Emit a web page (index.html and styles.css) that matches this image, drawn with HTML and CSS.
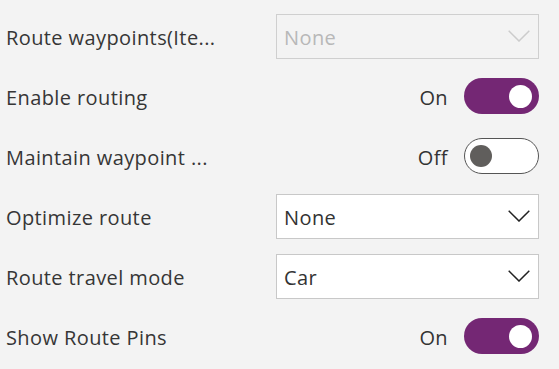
FILE: index.html
```html
<!DOCTYPE html>
<html>
<head>
<meta charset="utf-8">
<link rel="stylesheet" href="styles.css">
</head>
<body>
<div class="panel">
  <div class="row">
    <div class="label">Route waypoints(Ite...</div>
    <div class="dropdown disabled"><span class="value">None</span>
      <svg class="chev" viewBox="0 0 22 12"><path d="M0.7 0.7 L11 11 L21.3 0.7" /></svg></div>
  </div>
  <div class="row">
    <div class="label">Enable routing</div>
    <div class="toggle-wrap"><span class="state">On</span><span class="toggle on"><span class="knob"></span></span></div>
  </div>
  <div class="row">
    <div class="label">Maintain waypoint ...</div>
    <div class="toggle-wrap"><span class="state">Off</span><span class="toggle off"><span class="knob"></span></span></div>
  </div>
  <div class="row">
    <div class="label">Optimize route</div>
    <div class="dropdown"><span class="value">None</span>
      <svg class="chev" viewBox="0 0 22 12"><path d="M0.7 0.7 L11 11 L21.3 0.7" /></svg></div>
  </div>
  <div class="row">
    <div class="label">Route travel mode</div>
    <div class="dropdown"><span class="value">Car</span>
      <svg class="chev" viewBox="0 0 22 12"><path d="M0.7 0.7 L11 11 L21.3 0.7" /></svg></div>
  </div>
  <div class="row">
    <div class="label">Show Route Pins</div>
    <div class="toggle-wrap"><span class="state">On</span><span class="toggle on"><span class="knob"></span></span></div>
  </div>
</div>
</body>
</html>
```
FILE: styles.css
```css
html, body {
  margin: 0;
  padding: 0;
  background: #f3f3f3;
}
body {
  font-family: "Open Sans", "Noto Sans", sans-serif;
  font-size: 20px;
  letter-spacing: 0.4px;
  color: #363636;
  width: 559px;
  height: 369px;
  overflow: hidden;
}
.panel {
  padding: 6px 20px 0 6px;
}
.row {
  display: grid;
  grid-template-columns: 270px 263px;
  height: 60px;
  align-items: center;
}
.label {
  white-space: nowrap;
  line-height: 24px;
  padding-top: 3px;
}
.dropdown {
  box-sizing: border-box;
  height: 45px;
  border: 1px solid #c8c8c8;
  background: #ffffff;
  display: flex;
  align-items: center;
  justify-content: space-between;
  padding: 0 8px 0 7px;
}
.dropdown .value {
  line-height: 24px;
  padding-top: 3px;
  color: #333333;
}
.dropdown.disabled {
  background: #f3f3f3;
  border-color: #cfcfcf;
}
.dropdown.disabled .value {
  color: #b8b8b8;
}
.chev {
  width: 22px;
  height: 12px;
  fill: none;
  stroke: #222222;
  stroke-width: 1.5;
}
.dropdown.disabled .chev {
  stroke: #cccccc;
}
.toggle-wrap {
  display: flex;
  justify-content: flex-end;
  align-items: center;
  gap: 16px;
}
.state {
  line-height: 24px;
  padding-top: 4px;
  color: #333333;
}
.toggle {
  box-sizing: border-box;
  width: 75px;
  height: 36px;
  border-radius: 18px;
  display: flex;
  align-items: center;
}
.toggle.on {
  background: #742774;
  justify-content: flex-end;
  padding-right: 7px;
}
.toggle.on .knob {
  width: 23px;
  height: 23px;
  border-radius: 50%;
  background: #ffffff;
}
.toggle.off {
  background: #ffffff;
  border: 1px solid #555555;
  padding-left: 5px;
}
.toggle.off .knob {
  width: 22px;
  height: 22px;
  border-radius: 50%;
  background: #605e5c;
}
```
